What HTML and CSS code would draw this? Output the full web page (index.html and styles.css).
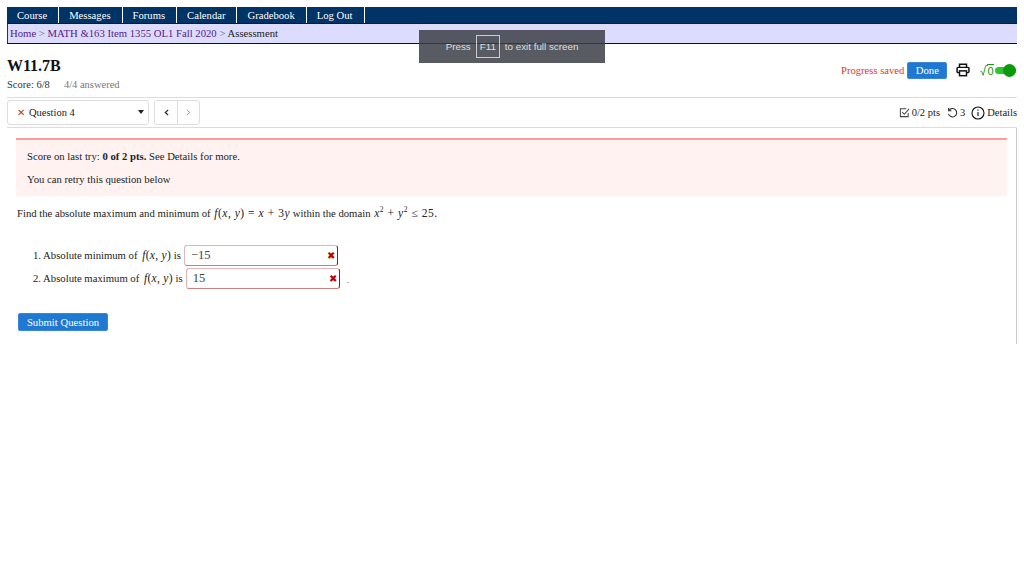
FILE: index.html
```html
<!DOCTYPE html>
<html lang="en">
<head>
<meta charset="utf-8">
<title>W11.7B</title>
<link rel="stylesheet" href="styles.css">
</head>
<body>
<nav class="nav">
  <a class="nav-item">Course</a><a class="nav-item">Messages</a><a class="nav-item">Forums</a><a class="nav-item">Calendar</a><a class="nav-item">Gradebook</a><a class="nav-item">Log Out</a>
</nav>
<div class="crumbs"><a class="link">Home</a> <span class="sep">&gt;</span> <a class="link">MATH &amp;163 Item 1355 OL1 Fall 2020</a> <span class="sep">&gt;</span> Assessment</div>

<header class="head">
  <div>
    <h1 class="title">W11.7B</h1>
    <div class="score"><span>Score: 6/8</span><span class="muted">4/4 answered</span></div>
  </div>
  <div class="head-tools">
    <span class="saved">Progress saved</span>
    <button class="btn done">Done</button>
    <svg class="print" viewBox="0 0 16 16" width="14" height="14" fill="none" stroke="#111" stroke-width="1.7"><path d="M4 5V1.5h8V5"/><rect x="1.2" y="5" width="13.6" height="6" rx="1.2"/><rect x="4" y="9" width="8" height="5.5" fill="#fff"/></svg>
    <span class="sqrt"><svg viewBox="0 0 10 14" width="8" height="13" fill="none" stroke="#1a9a10" stroke-width="1.1"><path d="M0.5 8.5 2 8 4 13 7 1H10"/></svg><span class="zero">0</span></span>
    <span class="toggle"><span class="knob"></span></span>
  </div>
</header>

<div class="qbar">
  <div class="select"><span class="xmark">✕</span><span class="select-label">Question 4</span><span class="caret"></span></div>
  <div class="pager">
    <span class="page"><svg viewBox="0 0 6 8" width="5" height="7" fill="none" stroke="#222" stroke-width="1.3"><path d="M5 1 1.5 4 5 7"/></svg></span>
    <span class="page"><svg viewBox="0 0 6 8" width="5" height="7" fill="none" stroke="#999" stroke-width="1.1"><path d="M1 1 4.5 4 1 7"/></svg></span>
  </div>
  <div class="qinfo">
    <svg viewBox="0 0 12 12" width="11" height="11" fill="none" stroke="#444" stroke-width="1.1"><path d="M10 6.5V10.5H1.5V2H8"/><path d="M3.5 5.5 5.8 8 11 2"/></svg>
    <span class="pts">0/2 pts</span>
    <svg class="retry" viewBox="0 0 12 12" width="11" height="11" fill="none" stroke="#222" stroke-width="1.1"><path d="M2.2 3.6A4.6 4.6 0 1 1 1.6 7.5"/><path d="M1.8 1v3h3"/></svg>
    <span class="pts">3</span>
    <svg class="info" viewBox="0 0 14 14" width="14" height="14" fill="none" stroke="#111" stroke-width="1.1"><circle cx="7" cy="7" r="6"/><path d="M7 6v4M7 3.6v1.2"/></svg>
    <span class="pts">Details</span>
  </div>
</div>

<main class="panel">
  <section class="alert">
    <p class="alert-line">Score on last try: <b>0 of 2 pts.</b> See Details for more.</p>
    <p class="alert-line">You can retry this question below</p>
  </section>
  <p class="prompt">Find the absolute maximum and minimum of <span class="math"><i>f</i>(<i>x</i>, <i>y</i>)<span class="op">=</span><i>x</i><span class="op">+</span>3<i>y</i></span> within the domain <span class="math"><i>x</i><sup class="sup">2</sup><span class="op">+</span><i>y</i><sup class="sup">2</sup><span class="op">≤</span>25.</span></p>
  <div class="answers">
    <div class="answer"><span class="label">1. Absolute minimum of <span class="math inline"><i>f</i>(<i>x</i>, <i>y</i>)</span> is</span>
      <div class="field first"><span>−15</span><span class="bad">✖</span></div></div>
    <div class="answer"><span class="label">2. Absolute maximum of <span class="math inline"><i>f</i>(<i>x</i>, <i>y</i>)</span> is</span>
      <div class="field second"><span>15</span><span class="bad">✖</span></div><span class="dot">.</span></div>
  </div>
  <button class="btn submit">Submit Question</button>
</main>

<div class="toast"><span>Press</span><kbd class="key">F11</kbd><span>to exit full screen</span></div>
</body>
</html>
```
FILE: styles.css
```css
* { box-sizing: border-box; }
html, body { height: 100%; }
body {
  margin: 0;
  padding: 7px 7px 0;
  background: #fff;
  color: #222;
  font-family: "Liberation Serif", serif;
  font-size: 10.7px;
  overflow: hidden;
}
.nav {
  display: flex;
  height: 17px;
  background: #003366;
  border-bottom: 1px solid #001a40;
}
.nav-item {
  padding: 1px 11px 0 10px;
  color: #fff;
  font-size: 10.65px;
  line-height: 15px;
  border-right: 1px solid #fff;
}
.crumbs {
  height: 20px;
  padding: 0 2px;
  background: #dcdcff;
  border-left: 1px solid #333;
  border-bottom: 1px solid #111;
  font-size: 10.7px;
  line-height: 19px;
  color: #222;
  width: 1010px;
}
.link { color: #551a8b; }
.sep { color: #666; }
.head {
  display: flex;
  justify-content: space-between;
  height: 54px;
  border-bottom: 1px solid #ddd;
  width: 1010px;
}
.title {
  margin: 13px 0 0;
  font-size: 16px;
  line-height: 17px;
  color: #111;
}
.score {
  display: flex;
  gap: 14px;
  margin-top: 5px;
  font-size: 10.5px;
  line-height: 12px;
  color: #333;
}
.muted { color: #777; }
.head-tools {
  display: flex;
  align-items: center;
  height: 16px;
  margin-top: 18px;
}
.saved { color: #e0352b; font-size: 10.6px; }
.btn {
  border: 1px solid #3a86d8;
  border-radius: 2px;
  background: #1f78d1;
  color: #fff;
  font-family: inherit;
  padding: 0;
}
.done { width: 40px; height: 17px; margin-left: 3px; font-size: 10.7px; }
.print { margin-left: 9px; }
.sqrt { display: flex; align-items: flex-end; margin-left: 10px; color: #1a9a10; }
.zero { font-family: "DejaVu Sans", sans-serif; font-size: 10.5px; line-height: 12px; border-top: 1px solid #1a9a10; margin-left: -1px; }
.toggle {
  position: relative;
  width: 21px;
  height: 7px;
  margin-left: 1px;
  margin-right: 1px;
  background: #2cc52c;
  border-radius: 4px;
}
.knob {
  position: absolute;
  right: 0;
  top: -3px;
  width: 13px;
  height: 13px;
  border-radius: 50%;
  background: #0c9a0c;
}
.qbar {
  display: flex;
  align-items: center;
  height: 30px;
  width: 1010px;
  border-bottom: 1px solid #ddd;
  padding-bottom: 1px;
}
.select {
  display: flex;
  align-items: center;
  width: 142px;
  height: 25px;
  padding: 0 4px 0 9px;
  border: 1px solid #ddd;
  border-radius: 3px;
  font-size: 10.5px;
}
.xmark { color: #b33; font-size: 10px; width: 12px; }
.select-label { flex: 1; }
.caret {
  width: 0;
  height: 0;
  border: 3px solid transparent;
  border-top: 4px solid #222;
  border-bottom: 0;
}
.pager {
  display: flex;
  margin-left: 5px;
  height: 25px;
  border: 1px solid #ddd;
  border-radius: 3px;
}
.page {
  display: flex;
  align-items: center;
  justify-content: center;
  width: 22px;
}
.page + .page { border-left: 1px solid #ddd; }
.qinfo {
  margin-left: auto;
  display: flex;
  align-items: center;
  gap: 2px;
  padding-top: 1px;
  font-size: 10.5px;
  color: #222;
}
.retry { margin-left: 5px; }
.info { margin-left: 4px; }
.panel {
  width: 1010px;
  height: 216px;
  padding: 10px 9px 0;
  border-right: 1px solid #ccc;
}
.alert {
  width: 991px;
  height: 58px;
  padding: 10px 11px;
  background: #fff2f1;
  border-top: 2px solid #ff9c9c;
}
.alert-line {
  margin: 0 0 11px;
  font-size: 10.7px;
  line-height: 12px;
}
.prompt {
  margin: 11px 0 0 1px;
  font-size: 10.7px;
  line-height: 13px;
}
.math { font-size: 11.5px; letter-spacing: 0.5px; margin-left: 1px; }
.math.inline { letter-spacing: 0.3px; margin-left: 2px; }
.op { margin: 0 3.5px; }
.sup { font-size: 7.5px; line-height: 0; }
.answers {
  margin: 24px 0 0 17px;
}
.answer {
  display: flex;
  align-items: center;
  gap: 3px;
  font-size: 10.7px;
  height: 23px;
}
.label { margin-bottom: 2px; }
.field {
  display: flex;
  justify-content: space-between;
  align-items: center;
  height: 21px;
  padding: 0 2px 0 6px;
  border: 1px solid #e3b5b5;
  border-bottom-color: #c98080;
  border-right: 1px solid #8a1a1a;
  border-radius: 3px;
  font-size: 12.5px;
  color: #444;
}
.first { width: 154px; }
.second { width: 154px; }
.bad { color: #b00; font-size: 10px; }
.dot { margin-left: 4px; color: #888; }
.submit {
  display: block;
  margin: 23px 0 0 2px;
  width: 90px;
  height: 18px;
  font-size: 10.7px;
}
.toast {
  position: absolute;
  left: 419px;
  top: 30px;
  width: 186px;
  height: 33px;
  display: flex;
  align-items: center;
  justify-content: center;
  gap: 5px;
  background: rgba(60, 62, 70, 0.85);
  color: #ddd;
  font-family: "Liberation Sans", sans-serif;
  font-size: 9.8px;
}
.key {
  display: block;
  padding: 0 3px;
  height: 23px;
  font-family: inherit;
  line-height: 21px;
  border: 1px solid #ccc;
}
```
